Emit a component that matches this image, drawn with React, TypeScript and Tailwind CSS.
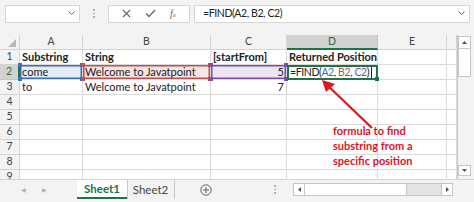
import React from 'react'

const font = { fontFamily: 'Lato, "Open Sans", "Liberation Sans", sans-serif' }

const cols = ['A', 'B', 'C', 'D', 'E', '']

function Handle({ className }: { className: string }) {
  return <span className={`absolute w-[4px] h-[4px] ${className}`} />
}

function HeaderCell({ label, active }: { label: string; active?: boolean }) {
  return (
    <div
      className={`flex items-center justify-center border-r border-b text-[10.5px] ${
        active
          ? 'bg-[#d2d2d2] border-r-[#c6c6c6] border-b-2 border-b-[#217346] text-[#217346]'
          : 'bg-[#f3f3f3] border-[#d4d4d4] text-[#444]'
      }`}
    >
      {label}
    </div>
  )
}

function RowNum({ n, active }: { n: number; active?: boolean }) {
  return (
    <div
      className={`flex items-center justify-center border-r border-b text-[10.5px] ${
        active
          ? 'bg-[#d2d2d2] border-b-[#c6c6c6] border-r-2 border-r-[#217346] text-[#217346]'
          : 'bg-[#f3f3f3] border-[#d4d4d4] text-[#444]'
      }`}
    >
      {n}
    </div>
  )
}

function Cell({ children, right, bold }: { children?: React.ReactNode; right?: boolean; bold?: boolean }) {
  return (
    <div
      className={`flex items-center overflow-hidden whitespace-nowrap border-r border-b border-[#dadada] bg-white px-[2px] text-[11px] text-[#222] ${
        right ? 'justify-end' : ''
      } ${bold ? 'font-bold' : ''}`}
    >
      {children}
    </div>
  )
}

function RefCell({
  children,
  color,
  fill,
  right,
}: {
  children?: React.ReactNode
  color: string
  fill: string
  right?: boolean
}) {
  return (
    <div
      className={`relative flex items-center whitespace-nowrap border-r border-b border-[#dadada] px-[2px] text-[11px] text-[#222] ${
        right ? 'justify-end' : ''
      }`}
      style={{ backgroundColor: fill, boxShadow: `inset 0 0 0 1.5px ${color}` }}
    >
      {children}
      <span className="absolute -left-[2px] -top-[2px] w-[4px] h-[4px]" style={{ backgroundColor: color }} />
      <span className="absolute -right-[2px] -top-[2px] w-[4px] h-[4px]" style={{ backgroundColor: color }} />
      <span className="absolute -left-[2px] -bottom-[2px] w-[4px] h-[4px]" style={{ backgroundColor: color }} />
      <span className="absolute -right-[2px] -bottom-[2px] w-[4px] h-[4px]" style={{ backgroundColor: color }} />
    </div>
  )
}

export default function App() {
  const emptyRows = [4, 5, 6, 7, 8, 9]

  return (
    <div className="relative w-[474px] h-[202px] overflow-hidden bg-[#f3f3f3]" style={font}>
      {/* Formula bar */}
      <div className="flex items-center h-[35px] pb-[8px] pl-[5px] pr-[4px] gap-[4px]">
        <div className="flex items-center justify-end w-[75px] h-[18px] bg-white border border-[#d6d6d6] pr-[4px]">
          <svg width="7" height="5" viewBox="0 0 7 5">
            <path d="M0.5 0.5 L3.5 3.5 L6.5 0.5" fill="none" stroke="#666" strokeWidth="1" />
          </svg>
        </div>
        <div className="flex flex-col items-center justify-center gap-[2px] w-[20px] h-[18px]">
          <span className="w-[1.5px] h-[1.5px] bg-[#b0b0b0]" />
          <span className="w-[1.5px] h-[1.5px] bg-[#b0b0b0]" />
          <span className="w-[1.5px] h-[1.5px] bg-[#b0b0b0]" />
        </div>
        <div className="flex items-center justify-around w-[82px] h-[18px] bg-white border border-[#d6d6d6] px-[6px]">
          <svg width="9" height="9" viewBox="0 0 9 9">
            <path d="M1 1 L8 8 M8 1 L1 8" stroke="#666" strokeWidth="1.1" />
          </svg>
          <svg width="11" height="9" viewBox="0 0 11 9">
            <path d="M1 4.5 L4 7.5 L10 1" fill="none" stroke="#666" strokeWidth="1.3" />
          </svg>
          <span className="text-[10px] italic text-[#666] leading-none" style={{ fontFamily: '"Liberation Serif", serif' }}>
            f<span className="text-[7px]">x</span>
          </span>
        </div>
        <div className="flex flex-1 items-center justify-between h-[18px] bg-white border border-[#d6d6d6] pl-[8px] pr-[4px] text-[10.5px] tracking-[-0.4px] text-[#222]">
          <span>=FIND(A2, B2, C2)</span>
          <svg width="7" height="5" viewBox="0 0 7 5">
            <path d="M0.5 0.5 L3.5 3.5 L6.5 0.5" fill="none" stroke="#666" strokeWidth="1" />
          </svg>
        </div>
      </div>

      {/* Sheet */}
      <div className="flex h-[144px] overflow-hidden">
        <div className="grid w-[457px] grid-cols-[20px_63px_128px_76px_91px_69px_10px] auto-rows-[15px] content-start bg-white">
          <div className="relative border-r border-b border-[#d4d4d4] bg-[#f3f3f3]">
            <svg className="absolute right-[3px] bottom-[2px]" width="8" height="8" viewBox="0 0 8 8">
              <path d="M8 0 L8 8 L0 8 Z" fill="#b8b8b8" />
            </svg>
          </div>
          {cols.map((c) => (
            <HeaderCell key={c || 'F'} label={c} active={c === 'D'} />
          ))}

          <RowNum n={1} />
          <Cell bold>Substring</Cell>
          <Cell bold>String</Cell>
          <Cell bold>[startFrom]</Cell>
          <Cell bold>Returned Position</Cell>
          <Cell />
          <Cell />

          <RowNum n={2} active />
          <RefCell color="#3d6fb5" fill="#e6edf7">come</RefCell>
          <RefCell color="#c0504d" fill="#f6e5e5">Welcome to Javatpoint</RefCell>
          <RefCell color="#7c4ea8" fill="#ece5f4" right>5</RefCell>
          <div className="relative flex items-center whitespace-nowrap border-2 border-[#217346] bg-white px-[1px] text-[10.5px] tracking-[-0.4px] text-[#222]">
            <span>
              =FIND(<span className="text-[#3d6fb5]">A2</span>, <span className="text-[#c0504d]">B2</span>,{' '}
              <span className="text-[#7c4ea8]">C2</span>)
            </span>
            <span className="ml-[2px] w-[1px] h-[11px] bg-[#222]" />
            <Handle className="-right-[3px] -bottom-[3px] bg-[#217346]" />
          </div>
          <Cell />
          <Cell />

          <RowNum n={3} />
          <Cell>to</Cell>
          <Cell>Welcome to Javatpoint</Cell>
          <Cell right>7</Cell>
          <Cell />
          <Cell />
          <Cell />

          {emptyRows.map((n) => (
            <React.Fragment key={n}>
              <RowNum n={n} />
              <Cell />
              <Cell />
              <Cell />
              <Cell />
              <Cell />
              <Cell />
            </React.Fragment>
          ))}
        </div>

        {/* Vertical scrollbar */}
        <div className="flex flex-col w-[14px] bg-[#f3f3f3] border-l border-[#c6c6c6]">
          <div className="flex items-center justify-center h-[13px] mt-[1px] bg-white border border-[#c6c6c6]">
            <svg width="5" height="3" viewBox="0 0 5 3">
              <path d="M0 3 L2.5 0 L5 3 Z" fill="#555" />
            </svg>
          </div>
          <div className="h-[28px] bg-white border-x border-b border-[#c6c6c6]" />
          <div className="flex-1" />
          <div className="flex items-center justify-center h-[11px] mb-[3px] bg-white border border-[#c6c6c6]">
            <svg width="5" height="3" viewBox="0 0 5 3">
              <path d="M0 0 L2.5 3 L5 0 Z" fill="#555" />
            </svg>
          </div>
        </div>
      </div>

      {/* Sheet tabs */}
      <div className="flex items-start h-[23px] border-t border-[#d4d4d4] bg-[#f3f3f3]">
        <div className="flex items-center gap-[16px] w-[77px] h-[19px] pl-[21px] text-[6px] text-[#b0b0b0]">
          <span>◀</span>
          <span>▶</span>
        </div>
        <div className="flex items-center justify-center w-[50px] h-[19px] bg-white border-b-2 border-[#217346] text-[11.5px] font-bold text-[#217346] shadow-[1px_0_0_#c6c6c6]">
          Sheet1
        </div>
        <div className="flex items-center justify-center w-[48px] h-[19px] border-r border-[#c6c6c6] text-[11.5px] text-[#444]">
          Sheet2
        </div>
        <div className="flex items-center justify-center w-[62px] h-[19px]">
          <svg width="12" height="12" viewBox="0 0 12 12">
            <circle cx="6" cy="6" r="5.2" fill="none" stroke="#666" strokeWidth="1" />
            <path d="M6 3 V9 M3 6 H9" stroke="#666" strokeWidth="1.1" />
          </svg>
        </div>
        <div className="flex flex-col items-center justify-center gap-[2px] w-[56px] h-[19px] pl-[20px]">
          <span className="w-[1.5px] h-[1.5px] bg-[#b0b0b0]" />
          <span className="w-[1.5px] h-[1.5px] bg-[#b0b0b0]" />
          <span className="w-[1.5px] h-[1.5px] bg-[#b0b0b0]" />
        </div>
        <div className="flex items-center w-[160px] h-[13px] mt-[3px] border border-[#c6c6c6] bg-[#e3e3e3]">
          <div className="flex items-center justify-center w-[11px] h-full bg-white border-r border-[#c6c6c6]">
            <svg width="3" height="5" viewBox="0 0 3 5">
              <path d="M3 0 L0 2.5 L3 5 Z" fill="#555" />
            </svg>
          </div>
          <div className="w-[102px] h-full bg-white border-r border-[#c6c6c6]" />
          <div className="flex-1" />
          <div className="flex items-center justify-center w-[11px] h-full bg-white border-l border-[#c6c6c6]">
            <svg width="3" height="5" viewBox="0 0 3 5">
              <path d="M0 0 L3 2.5 L0 5 Z" fill="#555" />
            </svg>
          </div>
        </div>
      </div>

      {/* Annotation */}
      <svg className="absolute left-0 top-0 pointer-events-none" width="474" height="202">
        <path d="M372 128 L325 83" stroke="#e0141e" strokeWidth="2.2" />
        <path d="M322 80 L335 84 L326 92 Z" fill="#e0141e" />
      </svg>
      <div className="absolute left-[333px] top-[123px] text-[11px] font-bold leading-[15px] text-[#e0141e]">
        formula to find
        <br />
        substring from a
        <br />
        specific position
      </div>
    </div>
  )
}
